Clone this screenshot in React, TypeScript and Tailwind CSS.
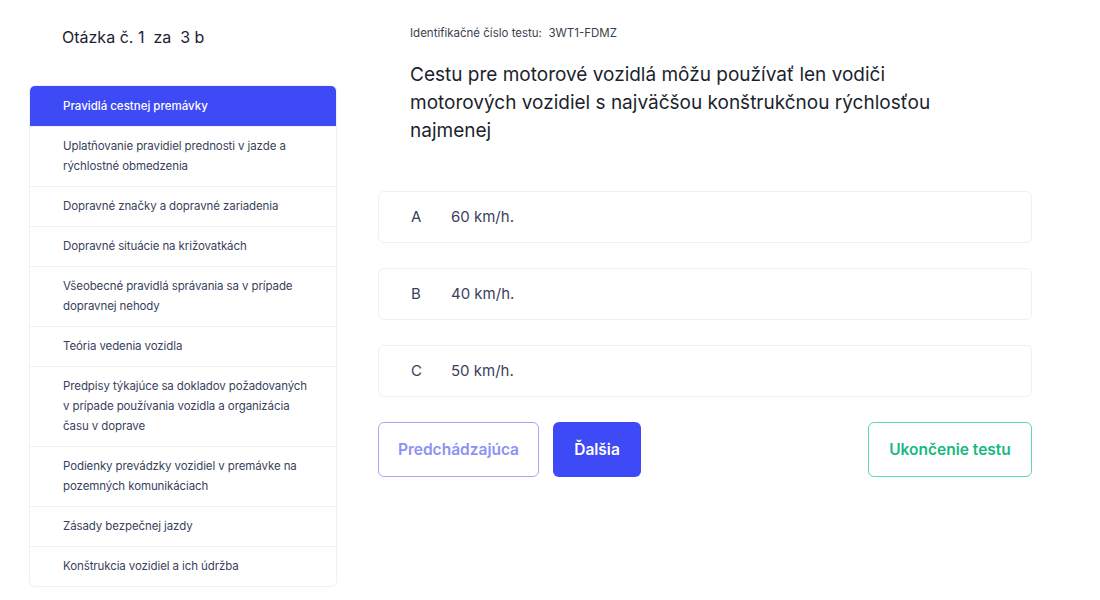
import React from "react";

const topics = [
  "Pravidlá cestnej premávky",
  "Uplatňovanie pravidiel prednosti v jazde a rýchlostné obmedzenia",
  "Dopravné značky a dopravné zariadenia",
  "Dopravné situácie na križovatkách",
  "Všeobecné pravidlá správania sa v prípade dopravnej nehody",
  "Teória vedenia vozidla",
  "Predpisy týkajúce sa dokladov požadovaných v prípade používania vozidla a organizácia času v doprave",
  "Podienky prevádzky vozidiel v premávke na pozemných komunikáciach",
  "Zásady bezpečnej jazdy",
  "Konštrukcia vozidiel a ich údržba",
];

const answers = [
  { letter: "A", text: "60 km/h." },
  { letter: "B", text: "40 km/h." },
  { letter: "C", text: "50 km/h." },
];

export default function App() {
  return (
    <div
      className="flex w-[1100px] h-[600px] bg-white text-[#1e2235]"
      style={{ fontFamily: "Inter, 'Noto Sans', sans-serif" }}
    >
      {/* sidebar */}
      <div className="w-[337px] shrink-0 pl-[29px] pt-[26px]">
        <div className="pl-[33px] text-[16px] leading-[22px] text-[#1f2233]">
          Otázka č. 1&nbsp; za&nbsp; 3 b
        </div>
        <div className="mt-[37px] w-[308px] rounded-md border border-[#eef0f5] overflow-hidden">
          {topics.map((t, i) => (
            <div
              key={i}
              className={
                i === 0
                  ? "bg-[#3d4af5] text-white pl-[33px] pr-[24px] pt-[10px] pb-[10px] text-[11.5px] leading-[20px] font-medium"
                  : "border-t border-[#eef0f5] text-[#3a3f5c] pl-[33px] pr-[24px] pt-[9px] pb-[10px] text-[11.5px] leading-[20px] tracking-[-0.1px]"
              }
            >
              {t}
            </div>
          ))}
        </div>
      </div>

      {/* main */}
      <div className="ml-[41px] w-[654px] pt-[24px]">
        <div className="pl-[32px] text-[11.5px] leading-[18px] text-[#3c3f4f]">
          Identifikačné číslo testu:&nbsp; 3WT1-FDMZ
        </div>
        <div className="pl-[32px] pr-[90px] mt-[19px] text-[19px] leading-[28px] text-[#1c1f2e]">
          Cestu pre motorové vozidlá môžu používať len vodiči motorových vozidiel s najväčšou konštrukčnou rýchlosťou najmenej
        </div>
        <div className="mt-[46px] flex flex-col gap-[25px]">
          {answers.map((a) => (
            <div
              key={a.letter}
              className="h-[52px] rounded-md border border-[#eef0f5] flex items-center pl-[32px] text-[15px] text-[#3a3f5c]"
            >
              <span className="w-[40px]">{a.letter}</span>
              <span>{a.text}</span>
            </div>
          ))}
        </div>
        <div className="mt-[25px] flex items-center">
          <button className="h-[55px] w-[161px] rounded-md border border-[#a3a8f8] text-[#8b91f6] text-[15.5px] font-semibold bg-white">
            Predchádzajúca
          </button>
          <button className="ml-[14px] h-[55px] w-[88px] rounded-md bg-[#3d4af5] text-white text-[15.5px] font-semibold">
            Ďalšia
          </button>
          <button className="ml-auto h-[55px] w-[164px] rounded-md border border-[#5fd9b0] text-[#16b982] text-[15.5px] font-semibold bg-white">
            Ukončenie testu
          </button>
        </div>
      </div>
    </div>
  );
}
